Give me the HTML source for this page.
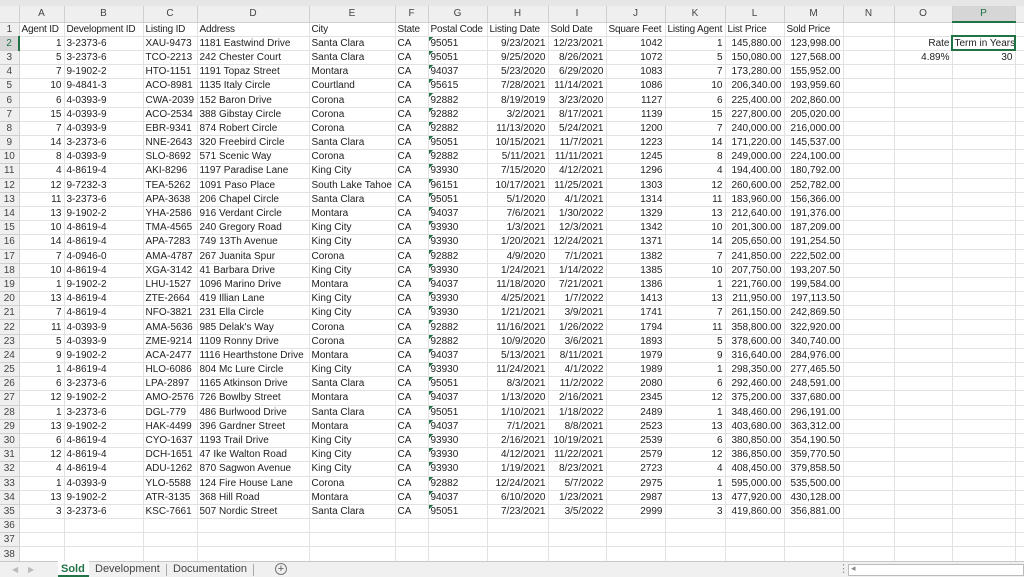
<!DOCTYPE html>
<html><head><meta charset="utf-8"><style>
*{box-sizing:border-box;margin:0;padding:0}
body{width:1024px;height:577px;overflow:hidden;background:#fff;font-family:"Liberation Sans",Arial,sans-serif;font-size:10px;color:#222;position:relative}
#top{position:absolute;left:0;top:0;width:1024px;height:6px;background:#e6e6e6}
table{position:absolute;left:0;top:6px;border-collapse:collapse;table-layout:fixed;width:1024px}
td{border-right:1px solid #e2e2e2;border-bottom:1px solid #e2e2e2;height:14.2px;line-height:13px;padding:0 2px;white-space:nowrap;overflow:hidden}
tr.h td{height:16px;background:#efefef;color:#444;text-align:center;border-color:#cfcfcf}
tr.f td{overflow:visible;letter-spacing:-0.2px}
td.rh{background:#efefef;color:#444;text-align:center;border-color:#cfcfcf;padding:0}
td.r{text-align:right}
td.g{background:linear-gradient(135deg,#217346 3px,transparent 3px) no-repeat;background-size:6px 6px}
td.sel{outline:2px solid #217346;outline-offset:-1px;overflow:visible}
#tabs{position:absolute;left:0;top:561px;width:1024px;height:16px;background:#f0f0f0;border-top:1px solid #c8c8c8;font-size:11px;color:#444}
#tabs span{position:absolute;top:1px}
</style></head><body>
<div id="top"></div>
<table>
<colgroup><col style="width:19px"><col style="width:45px"><col style="width:79px"><col style="width:54px"><col style="width:112px"><col style="width:86px"><col style="width:33px"><col style="width:59px"><col style="width:61px"><col style="width:58px"><col style="width:59px"><col style="width:60px"><col style="width:59px"><col style="width:59px"><col style="width:51px"><col style="width:58px"><col style="width:63px"><col style="width:9px"></colgroup>
<tr class="h"><td></td><td>A</td><td>B</td><td>C</td><td>D</td><td>E</td><td>F</td><td>G</td><td>H</td><td>I</td><td>J</td><td>K</td><td>L</td><td>M</td><td>N</td><td>O</td><td style="background:#d6d6d6;border-bottom:2px solid #217346;color:#217346">P</td><td></td></tr>
<tr class="f"><td class="rh">1</td><td>Agent ID</td><td>Development ID</td><td>Listing ID</td><td>Address</td><td>City</td><td>State</td><td>Postal Code</td><td>Listing Date</td><td>Sold Date</td><td>Square Feet</td><td>Listing Agent</td><td>List Price</td><td>Sold Price</td><td></td><td></td><td></td><td></td></tr>
<tr><td class="rh" style="background:#d6d6d6;border-right:2px solid #217346;color:#217346">2</td><td class="r">1</td><td>3-2373-6</td><td>XAU-9473</td><td>1181 Eastwind Drive</td><td>Santa Clara</td><td>CA</td><td class="g">95051</td><td class="r">9/23/2021</td><td class="r">12/23/2021</td><td class="r">1042</td><td class="r">1</td><td class="r">145,880.00</td><td class="r">123,998.00</td><td></td><td class="r">Rate</td><td class="sel">Term in Years</td><td></td></tr>
<tr><td class="rh">3</td><td class="r">5</td><td>3-2373-6</td><td>TCO-2213</td><td>242 Chester Court</td><td>Santa Clara</td><td>CA</td><td class="g">95051</td><td class="r">9/25/2020</td><td class="r">8/26/2021</td><td class="r">1072</td><td class="r">5</td><td class="r">150,080.00</td><td class="r">127,568.00</td><td></td><td class="r">4.89%</td><td class="r">30</td><td></td></tr>
<tr><td class="rh">4</td><td class="r">7</td><td>9-1902-2</td><td>HTO-1151</td><td>1191 Topaz Street</td><td>Montara</td><td>CA</td><td class="g">94037</td><td class="r">5/23/2020</td><td class="r">6/29/2020</td><td class="r">1083</td><td class="r">7</td><td class="r">173,280.00</td><td class="r">155,952.00</td><td></td><td></td><td></td><td></td></tr>
<tr><td class="rh">5</td><td class="r">10</td><td>9-4841-3</td><td>ACO-8981</td><td>1135 Italy Circle</td><td>Courtland</td><td>CA</td><td class="g">95615</td><td class="r">7/28/2021</td><td class="r">11/14/2021</td><td class="r">1086</td><td class="r">10</td><td class="r">206,340.00</td><td class="r">193,959.60</td><td></td><td></td><td></td><td></td></tr>
<tr><td class="rh">6</td><td class="r">6</td><td>4-0393-9</td><td>CWA-2039</td><td>152 Baron Drive</td><td>Corona</td><td>CA</td><td class="g">92882</td><td class="r">8/19/2019</td><td class="r">3/23/2020</td><td class="r">1127</td><td class="r">6</td><td class="r">225,400.00</td><td class="r">202,860.00</td><td></td><td></td><td></td><td></td></tr>
<tr><td class="rh">7</td><td class="r">15</td><td>4-0393-9</td><td>ACO-2534</td><td>388 Gibstay Circle</td><td>Corona</td><td>CA</td><td class="g">92882</td><td class="r">3/2/2021</td><td class="r">8/17/2021</td><td class="r">1139</td><td class="r">15</td><td class="r">227,800.00</td><td class="r">205,020.00</td><td></td><td></td><td></td><td></td></tr>
<tr><td class="rh">8</td><td class="r">7</td><td>4-0393-9</td><td>EBR-9341</td><td>874 Robert Circle</td><td>Corona</td><td>CA</td><td class="g">92882</td><td class="r">11/13/2020</td><td class="r">5/24/2021</td><td class="r">1200</td><td class="r">7</td><td class="r">240,000.00</td><td class="r">216,000.00</td><td></td><td></td><td></td><td></td></tr>
<tr><td class="rh">9</td><td class="r">14</td><td>3-2373-6</td><td>NNE-2643</td><td>320 Freebird Circle</td><td>Santa Clara</td><td>CA</td><td class="g">95051</td><td class="r">10/15/2021</td><td class="r">11/7/2021</td><td class="r">1223</td><td class="r">14</td><td class="r">171,220.00</td><td class="r">145,537.00</td><td></td><td></td><td></td><td></td></tr>
<tr><td class="rh">10</td><td class="r">8</td><td>4-0393-9</td><td>SLO-8692</td><td>571 Scenic Way</td><td>Corona</td><td>CA</td><td class="g">92882</td><td class="r">5/11/2021</td><td class="r">11/11/2021</td><td class="r">1245</td><td class="r">8</td><td class="r">249,000.00</td><td class="r">224,100.00</td><td></td><td></td><td></td><td></td></tr>
<tr><td class="rh">11</td><td class="r">4</td><td>4-8619-4</td><td>AKI-8296</td><td>1197 Paradise Lane</td><td>King City</td><td>CA</td><td class="g">93930</td><td class="r">7/15/2020</td><td class="r">4/12/2021</td><td class="r">1296</td><td class="r">4</td><td class="r">194,400.00</td><td class="r">180,792.00</td><td></td><td></td><td></td><td></td></tr>
<tr><td class="rh">12</td><td class="r">12</td><td>9-7232-3</td><td>TEA-5262</td><td>1091 Paso Place</td><td>South Lake Tahoe</td><td>CA</td><td class="g">96151</td><td class="r">10/17/2021</td><td class="r">11/25/2021</td><td class="r">1303</td><td class="r">12</td><td class="r">260,600.00</td><td class="r">252,782.00</td><td></td><td></td><td></td><td></td></tr>
<tr><td class="rh">13</td><td class="r">11</td><td>3-2373-6</td><td>APA-3638</td><td>206 Chapel Circle</td><td>Santa Clara</td><td>CA</td><td class="g">95051</td><td class="r">5/1/2020</td><td class="r">4/1/2021</td><td class="r">1314</td><td class="r">11</td><td class="r">183,960.00</td><td class="r">156,366.00</td><td></td><td></td><td></td><td></td></tr>
<tr><td class="rh">14</td><td class="r">13</td><td>9-1902-2</td><td>YHA-2586</td><td>916 Verdant Circle</td><td>Montara</td><td>CA</td><td class="g">94037</td><td class="r">7/6/2021</td><td class="r">1/30/2022</td><td class="r">1329</td><td class="r">13</td><td class="r">212,640.00</td><td class="r">191,376.00</td><td></td><td></td><td></td><td></td></tr>
<tr><td class="rh">15</td><td class="r">10</td><td>4-8619-4</td><td>TMA-4565</td><td>240 Gregory Road</td><td>King City</td><td>CA</td><td class="g">93930</td><td class="r">1/3/2021</td><td class="r">12/3/2021</td><td class="r">1342</td><td class="r">10</td><td class="r">201,300.00</td><td class="r">187,209.00</td><td></td><td></td><td></td><td></td></tr>
<tr><td class="rh">16</td><td class="r">14</td><td>4-8619-4</td><td>APA-7283</td><td>749 13Th Avenue</td><td>King City</td><td>CA</td><td class="g">93930</td><td class="r">1/20/2021</td><td class="r">12/24/2021</td><td class="r">1371</td><td class="r">14</td><td class="r">205,650.00</td><td class="r">191,254.50</td><td></td><td></td><td></td><td></td></tr>
<tr><td class="rh">17</td><td class="r">7</td><td>4-0946-0</td><td>AMA-4787</td><td>267 Juanita Spur</td><td>Corona</td><td>CA</td><td class="g">92882</td><td class="r">4/9/2020</td><td class="r">7/1/2021</td><td class="r">1382</td><td class="r">7</td><td class="r">241,850.00</td><td class="r">222,502.00</td><td></td><td></td><td></td><td></td></tr>
<tr><td class="rh">18</td><td class="r">10</td><td>4-8619-4</td><td>XGA-3142</td><td>41 Barbara Drive</td><td>King City</td><td>CA</td><td class="g">93930</td><td class="r">1/24/2021</td><td class="r">1/14/2022</td><td class="r">1385</td><td class="r">10</td><td class="r">207,750.00</td><td class="r">193,207.50</td><td></td><td></td><td></td><td></td></tr>
<tr><td class="rh">19</td><td class="r">1</td><td>9-1902-2</td><td>LHU-1527</td><td>1096 Marino Drive</td><td>Montara</td><td>CA</td><td class="g">94037</td><td class="r">11/18/2020</td><td class="r">7/21/2021</td><td class="r">1386</td><td class="r">1</td><td class="r">221,760.00</td><td class="r">199,584.00</td><td></td><td></td><td></td><td></td></tr>
<tr><td class="rh">20</td><td class="r">13</td><td>4-8619-4</td><td>ZTE-2664</td><td>419 Illian Lane</td><td>King City</td><td>CA</td><td class="g">93930</td><td class="r">4/25/2021</td><td class="r">1/7/2022</td><td class="r">1413</td><td class="r">13</td><td class="r">211,950.00</td><td class="r">197,113.50</td><td></td><td></td><td></td><td></td></tr>
<tr><td class="rh">21</td><td class="r">7</td><td>4-8619-4</td><td>NFO-3821</td><td>231 Ella Circle</td><td>King City</td><td>CA</td><td class="g">93930</td><td class="r">1/21/2021</td><td class="r">3/9/2021</td><td class="r">1741</td><td class="r">7</td><td class="r">261,150.00</td><td class="r">242,869.50</td><td></td><td></td><td></td><td></td></tr>
<tr><td class="rh">22</td><td class="r">11</td><td>4-0393-9</td><td>AMA-5636</td><td>985 Delak's Way</td><td>Corona</td><td>CA</td><td class="g">92882</td><td class="r">11/16/2021</td><td class="r">1/26/2022</td><td class="r">1794</td><td class="r">11</td><td class="r">358,800.00</td><td class="r">322,920.00</td><td></td><td></td><td></td><td></td></tr>
<tr><td class="rh">23</td><td class="r">5</td><td>4-0393-9</td><td>ZME-9214</td><td>1109 Ronny Drive</td><td>Corona</td><td>CA</td><td class="g">92882</td><td class="r">10/9/2020</td><td class="r">3/6/2021</td><td class="r">1893</td><td class="r">5</td><td class="r">378,600.00</td><td class="r">340,740.00</td><td></td><td></td><td></td><td></td></tr>
<tr><td class="rh">24</td><td class="r">9</td><td>9-1902-2</td><td>ACA-2477</td><td>1116 Hearthstone Drive</td><td>Montara</td><td>CA</td><td class="g">94037</td><td class="r">5/13/2021</td><td class="r">8/11/2021</td><td class="r">1979</td><td class="r">9</td><td class="r">316,640.00</td><td class="r">284,976.00</td><td></td><td></td><td></td><td></td></tr>
<tr><td class="rh">25</td><td class="r">1</td><td>4-8619-4</td><td>HLO-6086</td><td>804 Mc Lure Circle</td><td>King City</td><td>CA</td><td class="g">93930</td><td class="r">11/24/2021</td><td class="r">4/1/2022</td><td class="r">1989</td><td class="r">1</td><td class="r">298,350.00</td><td class="r">277,465.50</td><td></td><td></td><td></td><td></td></tr>
<tr><td class="rh">26</td><td class="r">6</td><td>3-2373-6</td><td>LPA-2897</td><td>1165 Atkinson Drive</td><td>Santa Clara</td><td>CA</td><td class="g">95051</td><td class="r">8/3/2021</td><td class="r">11/2/2022</td><td class="r">2080</td><td class="r">6</td><td class="r">292,460.00</td><td class="r">248,591.00</td><td></td><td></td><td></td><td></td></tr>
<tr><td class="rh">27</td><td class="r">12</td><td>9-1902-2</td><td>AMO-2576</td><td>726 Bowlby Street</td><td>Montara</td><td>CA</td><td class="g">94037</td><td class="r">1/13/2020</td><td class="r">2/16/2021</td><td class="r">2345</td><td class="r">12</td><td class="r">375,200.00</td><td class="r">337,680.00</td><td></td><td></td><td></td><td></td></tr>
<tr><td class="rh">28</td><td class="r">1</td><td>3-2373-6</td><td>DGL-779</td><td>486 Burlwood Drive</td><td>Santa Clara</td><td>CA</td><td class="g">95051</td><td class="r">1/10/2021</td><td class="r">1/18/2022</td><td class="r">2489</td><td class="r">1</td><td class="r">348,460.00</td><td class="r">296,191.00</td><td></td><td></td><td></td><td></td></tr>
<tr><td class="rh">29</td><td class="r">13</td><td>9-1902-2</td><td>HAK-4499</td><td>396 Gardner Street</td><td>Montara</td><td>CA</td><td class="g">94037</td><td class="r">7/1/2021</td><td class="r">8/8/2021</td><td class="r">2523</td><td class="r">13</td><td class="r">403,680.00</td><td class="r">363,312.00</td><td></td><td></td><td></td><td></td></tr>
<tr><td class="rh">30</td><td class="r">6</td><td>4-8619-4</td><td>CYO-1637</td><td>1193 Trail Drive</td><td>King City</td><td>CA</td><td class="g">93930</td><td class="r">2/16/2021</td><td class="r">10/19/2021</td><td class="r">2539</td><td class="r">6</td><td class="r">380,850.00</td><td class="r">354,190.50</td><td></td><td></td><td></td><td></td></tr>
<tr><td class="rh">31</td><td class="r">12</td><td>4-8619-4</td><td>DCH-1651</td><td>47 Ike Walton Road</td><td>King City</td><td>CA</td><td class="g">93930</td><td class="r">4/12/2021</td><td class="r">11/22/2021</td><td class="r">2579</td><td class="r">12</td><td class="r">386,850.00</td><td class="r">359,770.50</td><td></td><td></td><td></td><td></td></tr>
<tr><td class="rh">32</td><td class="r">4</td><td>4-8619-4</td><td>ADU-1262</td><td>870 Sagwon Avenue</td><td>King City</td><td>CA</td><td class="g">93930</td><td class="r">1/19/2021</td><td class="r">8/23/2021</td><td class="r">2723</td><td class="r">4</td><td class="r">408,450.00</td><td class="r">379,858.50</td><td></td><td></td><td></td><td></td></tr>
<tr><td class="rh">33</td><td class="r">1</td><td>4-0393-9</td><td>YLO-5588</td><td>124 Fire House Lane</td><td>Corona</td><td>CA</td><td class="g">92882</td><td class="r">12/24/2021</td><td class="r">5/7/2022</td><td class="r">2975</td><td class="r">1</td><td class="r">595,000.00</td><td class="r">535,500.00</td><td></td><td></td><td></td><td></td></tr>
<tr><td class="rh">34</td><td class="r">13</td><td>9-1902-2</td><td>ATR-3135</td><td>368 Hill Road</td><td>Montara</td><td>CA</td><td class="g">94037</td><td class="r">6/10/2020</td><td class="r">1/23/2021</td><td class="r">2987</td><td class="r">13</td><td class="r">477,920.00</td><td class="r">430,128.00</td><td></td><td></td><td></td><td></td></tr>
<tr><td class="rh">35</td><td class="r">3</td><td>3-2373-6</td><td>KSC-7661</td><td>507 Nordic Street</td><td>Santa Clara</td><td>CA</td><td class="g">95051</td><td class="r">7/23/2021</td><td class="r">3/5/2022</td><td class="r">2999</td><td class="r">3</td><td class="r">419,860.00</td><td class="r">356,881.00</td><td></td><td></td><td></td><td></td></tr>
<tr><td class="rh">36</td><td></td><td></td><td></td><td></td><td></td><td></td><td></td><td></td><td></td><td></td><td></td><td></td><td></td><td></td><td></td><td></td><td></td></tr>
<tr><td class="rh">37</td><td></td><td></td><td></td><td></td><td></td><td></td><td></td><td></td><td></td><td></td><td></td><td></td><td></td><td></td><td></td><td></td><td></td></tr>
<tr><td class="rh">38</td><td></td><td></td><td></td><td></td><td></td><td></td><td></td><td></td><td></td><td></td><td></td><td></td><td></td><td></td><td></td><td></td><td></td></tr>
</table>
<div id="tabs">
<span style="left:12px;color:#bbb;font-size:8px;top:3px">◀</span><span style="left:28px;color:#bbb;font-size:8px;top:3px">▶</span>
<span style="left:58px;top:-1px;width:31px;height:16px;background:#fff;border-bottom:2px solid #217346"></span>
<span style="left:61px;color:#217346;font-weight:bold">Sold</span>
<span style="left:95px">Development</span>
<span style="left:166px;top:2px;width:1px;height:12px;background:#aaa"></span>
<span style="left:173px">Documentation</span>
<span style="left:253px;top:2px;width:1px;height:12px;background:#aaa"></span>
<span style="left:275px;top:1px;width:12px;height:12px;border:1px solid #777;border-radius:50%;text-align:center;line-height:10px;font-size:11px;color:#555">+</span>
<span style="left:838px;color:#999;top:0">⋮</span>
<span style="left:848px;top:2px;width:176px;height:12px;background:#fff;border:1px solid #bbb"></span>
<span style="left:851px;top:1px;color:#888;font-size:9px">◂</span>
</div>
</body></html>
